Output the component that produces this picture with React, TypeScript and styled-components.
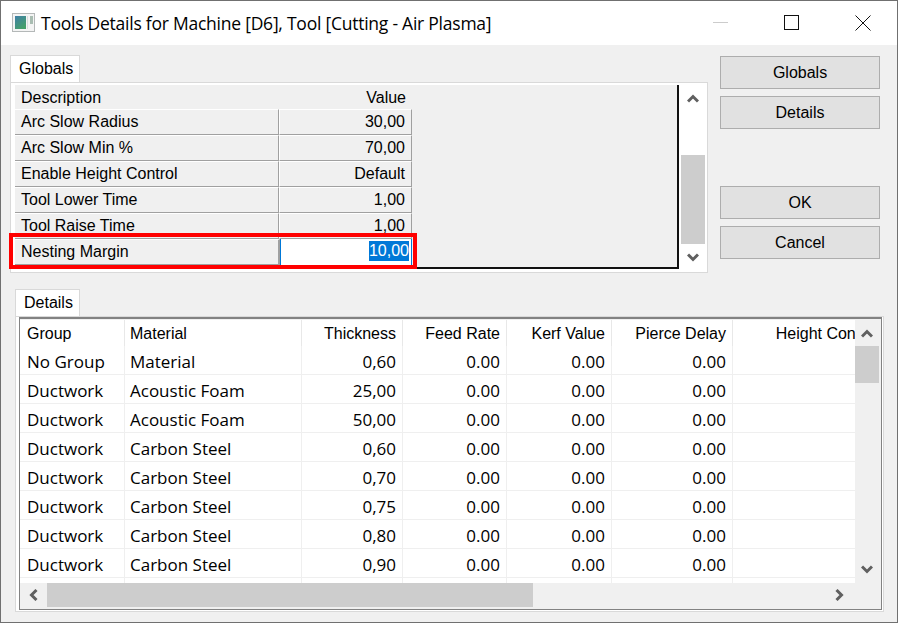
import React from 'react';
import styled, { createGlobalStyle } from 'styled-components';

const GlobalStyle = createGlobalStyle`
  html, body {
    margin: 0;
    padding: 0;
    background: #f0f0f0;
  }
`;

const globalRows = [
  { label: 'Arc Slow Radius', value: '30,00' },
  { label: 'Arc Slow Min %', value: '70,00' },
  { label: 'Enable Height Control', value: 'Default' },
  { label: 'Tool Lower Time', value: '1,00' },
  { label: 'Tool Raise Time', value: '1,00' }
];

const detailRows = [
  ['No Group', 'Material', '0,60'],
  ['Ductwork', 'Acoustic Foam', '25,00'],
  ['Ductwork', 'Acoustic Foam', '50,00'],
  ['Ductwork', 'Carbon Steel', '0,60'],
  ['Ductwork', 'Carbon Steel', '0,70'],
  ['Ductwork', 'Carbon Steel', '0,75'],
  ['Ductwork', 'Carbon Steel', '0,80'],
  ['Ductwork', 'Carbon Steel', '0,90'],
  ['', '', '']
];

const Arrow: React.FC<{ dir: 'up' | 'down' | 'left' | 'right' }> = ({ dir }) => {
  const points = {
    up: '1,8.5 6,3.5 11,8.5',
    down: '1,3.5 6,8.5 11,3.5',
    left: '8.5,1 3.5,6 8.5,11',
    right: '3.5,1 8.5,6 3.5,11'
  }[dir];
  return (
    <svg width="12" height="12" viewBox="0 0 12 12">
      <polyline points={points} fill="none" stroke="#606060" strokeWidth="3" />
    </svg>
  );
};

const App: React.FC = () => {
  return (
    <Window>
      <GlobalStyle />
      <TitleBar>
        <svg width="24" height="20" viewBox="0 0 24 20">
          <defs>
            <linearGradient id="appIconFill" x1="0" y1="0" x2="0.6" y2="1">
              <stop offset="0" stopColor="#3f7fa8" />
              <stop offset="1" stopColor="#45a06a" />
            </linearGradient>
          </defs>
          <rect x="0.5" y="0.5" width="22" height="18" fill="#f4f4f4" stroke="#b4b8b8" />
          <rect x="3" y="3" width="11" height="13" fill="url(#appIconFill)" />
          <rect x="15" y="3" width="1" height="13" fill="#d8dcdc" />
          <rect x="18" y="3" width="3" height="8" fill="#a9bdb2" />
        </svg>
        <TitleText>Tools Details for Machine [D6], Tool [Cutting - Air Plasma]</TitleText>
        <WindowControls>
          <ControlBox>
            <svg width="16" height="16" viewBox="0 0 16 16">
              <line x1="0" y1="7.5" x2="15" y2="7.5" stroke="#cccccc" />
            </svg>
          </ControlBox>
          <ControlBox>
            <svg width="16" height="16" viewBox="0 0 16 16">
              <rect x="0.5" y="0.5" width="14" height="14" fill="none" stroke="#111" />
            </svg>
          </ControlBox>
          <ControlBox>
            <svg width="16" height="16" viewBox="0 0 16 16">
              <path d="M0.5 0.5 L15.5 15.5 M15.5 0.5 L0.5 15.5" fill="none" stroke="#111" />
            </svg>
          </ControlBox>
        </WindowControls>
      </TitleBar>

      <Body>
        <TopRow>
          <GlobalsGroup>
            <Tab>Globals</Tab>
            <GlobalsPanel>
              <PropertyGrid>
                <PropertyHeader>
                  <span>Description</span>
                  <span>Value</span>
                </PropertyHeader>
                {globalRows.map(row => (
                  <PropertyRow key={row.label}>
                    <PropertyLabel>{row.label}</PropertyLabel>
                    <PropertyValue>{row.value}</PropertyValue>
                  </PropertyRow>
                ))}
                <PropertyRow>
                  <EditingLabel>Nesting Margin</EditingLabel>
                  <EditingValue>
                    <Selection>10,00</Selection>
                  </EditingValue>
                </PropertyRow>
              </PropertyGrid>
              <VScroll>
                <ScrollButton $padTop={4}>
                  <Arrow dir="up" />
                </ScrollButton>
                <VTrack>
                  <GlobalsThumb />
                </VTrack>
                <ScrollButton>
                  <Arrow dir="down" />
                </ScrollButton>
              </VScroll>
              <Highlight />
            </GlobalsPanel>
          </GlobalsGroup>
          <ButtonColumn>
            <ActionButton>Globals</ActionButton>
            <ActionButton>Details</ActionButton>
            <ActionButton $spaced>OK</ActionButton>
            <ActionButton>Cancel</ActionButton>
          </ButtonColumn>
        </TopRow>

        <DetailsGroup>
          <DetailsTab>Details</DetailsTab>
          <DetailsPanel>
            <DetailsFrame>
              <TableArea>
                <TableClip>
                  <HeaderRow>
                    <HeaderCell>Group</HeaderCell>
                    <HeaderCell>Material</HeaderCell>
                    <HeaderCell $right>Thickness</HeaderCell>
                    <HeaderCell $right>Feed Rate</HeaderCell>
                    <HeaderCell $right>Kerf Value</HeaderCell>
                    <HeaderCell $right>Pierce Delay</HeaderCell>
                    <HeaderCell $right>Height Control</HeaderCell>
                  </HeaderRow>
                  {detailRows.map((row, index) => (
                    <DataRow key={index}>
                      <DataCell>{row[0]}</DataCell>
                      <DataCell>{row[1]}</DataCell>
                      <DataCell $right>{row[2]}</DataCell>
                      <DataCell $right>{row[0] && '0.00'}</DataCell>
                      <DataCell $right>{row[0] && '0.00'}</DataCell>
                      <DataCell $right>{row[0] && '0.00'}</DataCell>
                      <DataCell $right />
                    </DataRow>
                  ))}
                </TableClip>
                <DetailsVScroll>
                  <DetailsScrollButton $padTop={2}>
                    <Arrow dir="up" />
                  </DetailsScrollButton>
                  <VTrack>
                    <DetailsThumb />
                  </VTrack>
                  <ScrollButton $padBottom={4}>
                    <Arrow dir="down" />
                  </ScrollButton>
                </DetailsVScroll>
              </TableArea>
              <HScroll>
                <HScrollButton>
                  <Arrow dir="left" />
                </HScrollButton>
                <HTrack>
                  <HThumb />
                </HTrack>
                <HScrollButton>
                  <Arrow dir="right" />
                </HScrollButton>
              </HScroll>
            </DetailsFrame>
          </DetailsPanel>
        </DetailsGroup>
      </Body>
    </Window>
  );
};

const Window = styled.div`
  box-sizing: border-box;
  width: 898px;
  height: 623px;
  border: 1px solid #707070;
  background: #f0f0f0;
  color: #000;
  font-family: 'Liberation Sans', Arial, sans-serif;
  font-size: 16px;
  display: flex;
  flex-direction: column;
  overflow: hidden;
`;

const TitleBar = styled.div`
  height: 44px;
  flex: none;
  background: #fff;
  display: flex;
  align-items: center;
  padding-left: 11px;
`;

const TitleText = styled.div`
  margin-left: 5px;
  font-family: 'Open Sans', sans-serif;
  font-size: 17.5px;
  letter-spacing: -0.24px;
  flex: 1;
`;

const WindowControls = styled.div`
  display: flex;
  gap: 55px;
  padding-right: 26px;
`;

const ControlBox = styled.div`
  width: 16px;
  height: 16px;
`;

const Body = styled.div`
  flex: 1;
  padding: 10px 0 0 9px;
`;

const TopRow = styled.div`
  display: flex;
`;

const GlobalsGroup = styled.div`
  width: 698px;
`;

const Tab = styled.div`
  box-sizing: border-box;
  width: 70px;
  height: 27px;
  background: #fff;
  border: 1px solid #d9d9d9;
  border-bottom: none;
  padding: 4px 0 0 8px;
`;

const GlobalsPanel = styled.div`
  position: relative;
  box-sizing: border-box;
  height: 191px;
  border: 1px solid #d9d9d9;
  background: #fff;
  padding: 2px 1px 3px 4px;
  display: flex;
`;

const PropertyGrid = styled.div`
  width: 664px;
  background: #f0f0f0;
  border-right: 2px solid #111;
  border-bottom: 2px solid #111;
  box-sizing: border-box;
  overflow: hidden;
`;

const PropertyHeader = styled.div`
  box-sizing: border-box;
  width: 397px;
  height: 24px;
  display: flex;
  justify-content: space-between;
  align-items: center;
  padding: 2px 6px 0 6px;
`;

const PropertyRow = styled.div`
  display: flex;
  width: 397px;
  height: 26px;
`;

const PropertyLabel = styled.div`
  box-sizing: border-box;
  width: 264px;
  border-top: 1px solid #fff;
  border-right: 1px solid #a0a0a0;
  border-bottom: 1px solid #a0a0a0;
  padding-left: 6px;
  line-height: 24px;
`;

const EditingLabel = styled(PropertyLabel)`
  width: 265px;
  border-right-width: 2px;
`;

const PropertyValue = styled.div`
  box-sizing: border-box;
  width: 133px;
  border-top: 1px solid #fff;
  border-left: 1px solid #fff;
  border-right: 1px solid #a0a0a0;
  border-bottom: 1px solid #a0a0a0;
  padding-right: 6px;
  text-align: right;
  line-height: 24px;
`;

const EditingValue = styled.div`
  box-sizing: border-box;
  width: 132px;
  background: #fff;
  border-left: 1px solid #0078d7;
  border-right: 1px solid #0078d7;
  padding-top: 2px;
  text-align: right;
`;

const Selection = styled.span`
  display: inline-block;
  height: 20px;
  line-height: 20px;
  margin-right: 2px;
  background: #0078d7;
  color: #fff;
`;

const Highlight = styled.div`
  position: absolute;
  left: -2px;
  top: 150px;
  box-sizing: border-box;
  width: 408px;
  height: 36px;
  border: 4px solid #ff0000;
`;

const VScroll = styled.div`
  width: 24px;
  margin-left: 2px;
  display: flex;
  flex-direction: column;
`;

const ScrollButton = styled.div<{ $padTop?: number; $padBottom?: number }>`
  flex: none;
  box-sizing: border-box;
  height: 24px;
  padding-top: ${({ $padTop }) => $padTop || 0}px;
  padding-bottom: ${({ $padBottom }) => $padBottom || 0}px;
  display: flex;
  align-items: center;
  justify-content: center;
`;

const VTrack = styled.div`
  flex: 1;
  position: relative;
`;

const GlobalsThumb = styled.div`
  height: 89px;
  margin-top: 46px;
  background: #cdcdcd;
`;

const DetailsThumb = styled.div`
  height: 37px;
  background: #cdcdcd;
`;

const ButtonColumn = styled.div`
  margin-left: 12px;
  width: 160px;
  padding-top: 1px;
  display: flex;
  flex-direction: column;
  gap: 7px;
`;

const ActionButton = styled.div<{ $spaced?: boolean }>`
  box-sizing: border-box;
  height: 33px;
  margin-top: ${({ $spaced }) => ($spaced ? '50px' : '0')};
  background: #e1e1e1;
  border: 1px solid #adadad;
  display: flex;
  align-items: center;
  justify-content: center;
`;

const DetailsGroup = styled.div`
  margin: 16px 0 0 5px;
`;

const DetailsTab = styled(Tab)`
  width: 65px;
`;

const DetailsPanel = styled.div`
  box-sizing: border-box;
  width: 869px;
  height: 296px;
  border: 1px solid #d9d9d9;
  background: #fff;
  padding: 0 1px 1px 3px;
`;

const DetailsFrame = styled.div`
  box-sizing: border-box;
  height: 100%;
  background: #f0f0f0;
  border: 1px solid #828282;
  border-top-width: 2px;
  padding-top: 1px;
  display: flex;
  flex-direction: column;
`;

const TableArea = styled.div`
  height: 263px;
  display: flex;
`;

const TableClip = styled.div`
  width: 835px;
  background: #fff;
  overflow: hidden;
`;

const HeaderRow = styled.div`
  display: grid;
  grid-template-columns: 105px 177px 101px 104px 105px 121px 152px;
  grid-template-rows: 26px;
`;

const DataRow = styled(HeaderRow)`
  grid-template-rows: 29px;
`;

const HeaderCell = styled.div<{ $right?: boolean }>`
  box-sizing: border-box;
  padding: 0 6px 0 5px;
  line-height: 28px;
  border-right: 1px solid #e8e8e8;
  text-align: ${({ $right }) => ($right ? 'right' : 'left')};
  white-space: nowrap;
  background: #fff;

  &:first-child {
    padding-left: 7px;
  }
`;

const DataCell = styled.div<{ $right?: boolean }>`
  box-sizing: border-box;
  padding: 1px 6px 0 5px;
  line-height: 29px;
  font-family: 'Open Sans', sans-serif;
  font-size: 17px;
  border-right: 1px solid #efefef;
  border-bottom: 1px solid #efefef;
  text-align: ${({ $right }) => ($right ? 'right' : 'left')};
  white-space: nowrap;

  &:first-child {
    padding-left: 7px;
  }
`;

const DetailsVScroll = styled(VScroll)`
  margin-left: 0;
`;

const DetailsScrollButton = styled(ScrollButton)`
  height: 26px;
`;

const HScroll = styled.div`
  height: 24px;
  display: flex;
  padding-right: 29px;
`;

const HScrollButton = styled.div`
  flex: none;
  width: 27px;
  display: flex;
  align-items: center;
  justify-content: center;
`;

const HTrack = styled.div`
  flex: 1;
`;

const HThumb = styled.div`
  width: 486px;
  height: 100%;
  background: #cdcdcd;
`;

export default App;
